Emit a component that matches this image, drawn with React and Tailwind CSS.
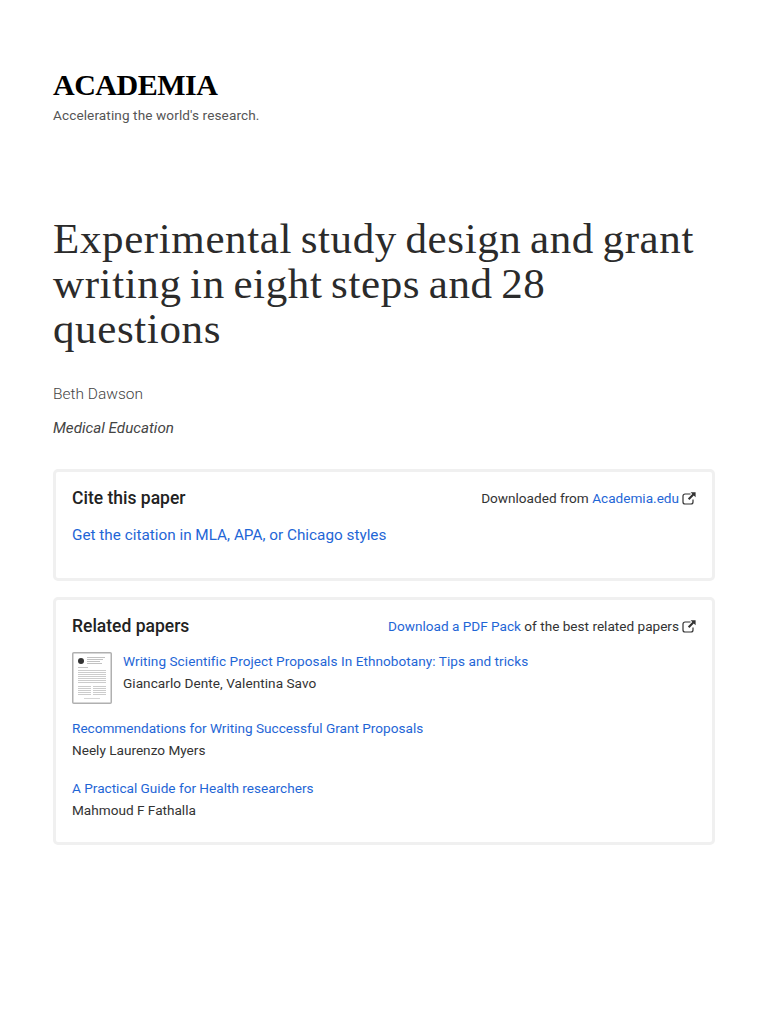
//Academia paper cover page

const related = [
  { title: 'Recommendations for Writing Successful Grant Proposals', authors: 'Neely Laurenzo Myers' },
  { title: 'A Practical Guide for Health researchers', authors: 'Mahmoud F Fathalla' },
]

function ExternalIcon() {
  return (
    <svg width="14" height="13" viewBox="0 0 14 13" className="ml-[3px] shrink-0">
      <path d="M8.5 2H3a2 2 0 0 0-2 2v6a2 2 0 0 0 2 2h6a2 2 0 0 0 2-2V7.5" fill="none" stroke="#333" strokeWidth="1.2" />
      <path d="M8.6 0.3H13.6V5.3L11.8 3.6L7.4 8L5.9 6.5L10.3 2Z" fill="#333" />
    </svg>
  )
}

function Thumb() {
  const topLines = [18.5, 20.5, 22.5, 24.5, 26.5, 28.5, 30.5]
  const colLines = [34.5, 36.5, 38.5, 40.5, 42.5]
  return (
    <svg width="40" height="52" viewBox="0 0 40 52" className="shrink-0">
      <rect x="0.75" y="0.75" width="38.5" height="50.5" rx="1" fill="#fff" stroke="#b0b0b0" strokeWidth="1.5" />
      <circle cx="9" cy="9" r="3" fill="#333" />
      <path d="M15 5.5H33M15 7.5H31M15 9.5H28M15 11.5H30" stroke="#999" strokeWidth="0.6" />
      <path d="M6 15.5H16" stroke="#888" strokeWidth="0.5" />
      {topLines.map((y) => (
        <path key={y} d={`M6 ${y}H34`} stroke="#999" strokeWidth="0.5" />
      ))}
      {colLines.map((y) => (
        <path key={y} d={`M6 ${y}H19M21 ${y}H34`} stroke="#999" strokeWidth="0.5" />
      ))}
      <path d="M12 46.5H28" stroke="#aaa" strokeWidth="0.5" />
    </svg>
  )
}

export default function App() {
  return (
    <div className="min-h-[1024px] bg-white pt-[68px] px-[53px] font-['Roboto',sans-serif] text-[#333]">
      {/* Header */}
      <div className="font-['Liberation_Serif',serif] font-bold text-[30px] leading-[34px] tracking-[-0.5px] text-black">ACADEMIA</div>
      <div className="mt-[3px] text-[13.6px] leading-[20px] tracking-[0.1px] text-[#555]">Accelerating the world's research.</div>

      {/* Title */}
      <h1 className="mt-[91px] font-['Liberation_Serif',serif] text-[43px] leading-[45px] tracking-[0.62px] [word-spacing:-2.8px] text-[#2b2b2b]">
        Experimental study design and grant writing in eight steps and 28 questions
      </h1>
      <div className="mt-[31px] text-[15.5px] leading-[24px] font-light text-[#444]">Beth Dawson</div>
      <div className="mt-[10px] text-[15.2px] leading-[24px] italic text-[#444]">Medical Education</div>

      {/* Cite */}
      <div className="mt-[29px] h-[112px] rounded-[5px] border-[3px] border-[#f0f0f0] px-[16px] pt-[14px]">
        <div className="flex items-center justify-between">
          <div className="text-[17.5px] leading-[24px] font-medium text-[#222]">Cite this paper</div>
          <div className="flex items-center text-[13.6px] leading-[20px]">
            <span>Downloaded from&nbsp;</span>
            <span className="text-[#1f66d6]">Academia.edu</span>
            <ExternalIcon />
          </div>
        </div>
        <div className="mt-[13px] text-[15.3px] leading-[24px] text-[#1f66d6]">Get the citation in MLA, APA, or Chicago styles</div>
      </div>

      {/* Related */}
      <div className="mt-[16px] h-[248px] rounded-[5px] border-[3px] border-[#f0f0f0] px-[16px] pt-[14px]">
        <div className="flex items-center justify-between">
          <div className="text-[17.5px] leading-[24px] font-medium text-[#222]">Related papers</div>
          <div className="flex items-center text-[13.6px] leading-[20px]">
            <span className="text-[#1f66d6]">Download a PDF Pack</span>
            <span>&nbsp;of the best related papers</span>
            <ExternalIcon />
          </div>
        </div>
        <div className="mt-[14px] flex gap-[11px]">
          <Thumb />
          <div className="-mt-[2px] text-[13.6px] leading-[22px] tracking-[0.05px]">
            <div className="text-[#1f66d6]">Writing Scientific Project Proposals In Ethnobotany: Tips and tricks</div>
            <div>Giancarlo Dente, Valentina Savo</div>
          </div>
        </div>
        <div className="mt-[13px] flex flex-col gap-[16px] text-[13.6px] leading-[22px]">
          {related.map((item) => (
            <div key={item.title}>
              <div className="text-[#1f66d6]">{item.title}</div>
              <div>{item.authors}</div>
            </div>
          ))}
        </div>
      </div>
    </div>
  )
}
